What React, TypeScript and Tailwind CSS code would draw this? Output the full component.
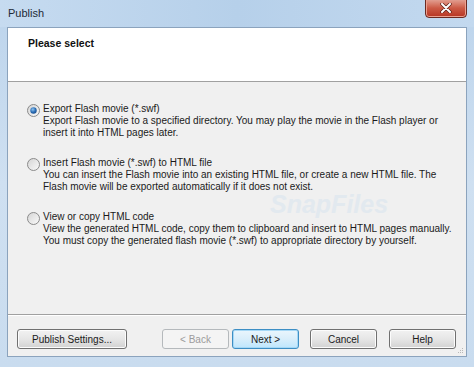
import React from "react";

const font = { fontFamily: '"Liberation Sans", Arial, sans-serif' };

function Radio({ checked }: { checked?: boolean }) {
  return (
    <svg width="13" height="13" viewBox="0 0 13 13" className="shrink-0">
      <defs>
        <linearGradient id={checked ? "rbOn" : "rbOff"} x1="0" y1="0" x2="1" y2="1">
          <stop offset="0" stopColor="#d4d4d4" />
          <stop offset="1" stopColor="#fbfbfb" />
        </linearGradient>
        <radialGradient id="dot" cx="0.4" cy="0.35" r="0.7">
          <stop offset="0" stopColor="#8fc4f0" />
          <stop offset="0.6" stopColor="#2a6cb4" />
          <stop offset="1" stopColor="#1b4f8f" />
        </radialGradient>
      </defs>
      <circle cx="6.5" cy="6.5" r="6" fill={checked ? "url(#rbOn)" : "url(#rbOff)"} stroke="#8a8a8a" strokeWidth="1" />
      {checked && <circle cx="6.5" cy="6.5" r="3.2" fill="url(#dot)" />}
    </svg>
  );
}

function Option({ checked, label, lines }: { checked?: boolean; label: string; lines: string[] }) {
  return (
    <div className="flex items-start gap-[3px]">
      <div className="pt-[1px]">
        <Radio checked={checked} />
      </div>
      <div className="flex flex-col text-[10px] leading-[12px] text-[#1a1a1a]">
        <span>{label}</span>
        {lines.map((l) => (
          <span key={l}>{l}</span>
        ))}
      </div>
    </div>
  );
}

function Btn({ children, w, kind }: { children: React.ReactNode; w: string; kind?: "disabled" | "default" }) {
  const base = "h-[20px] rounded-[3px] border text-[10px] flex items-center justify-center";
  if (kind === "disabled")
    return <div className={`${base} ${w} border-[#b5b9bc] bg-[#f4f4f4] text-[#9c9c9c]`}>{children}</div>;
  if (kind === "default")
    return (
      <div className={`${base} ${w} border-[#3d8ec4] bg-linear-to-b from-[#eaf6fd] via-[#d9eefb] to-[#bee6fd] text-[#1a1a1a] shadow-[inset_0_0_0_1px_#a6d8f6]`}>
        {children}
      </div>
    );
  return (
    <div className={`${base} ${w} border-[#707070] bg-linear-to-b from-[#f2f2f2] via-[#e6e6e6] to-[#d2d2d2] text-[#1a1a1a] shadow-[inset_0_0_0_1px_#fcfcfc]`}>
      {children}
    </div>
  );
}

export default function App() {
  return (
    <div
      className="relative w-[474px] h-[367px] overflow-hidden bg-linear-to-b from-[#bcd4ec] via-[#cfe0f1] to-[#c9dcef] flex flex-col"
      style={font}
    >
      {/* Title bar */}
      <div className="h-[27px] shrink-0 flex items-center pl-[8px] pb-[1px] bg-linear-to-r from-[#c6dbf0] via-[#b6d0ea] to-[#c3d9ef]">
        <span className="text-[11px] text-[#1e2a36]">Publish</span>
      </div>
      <div className="absolute right-[7px] top-[-2px] w-[42px] h-[20px] rounded-b-[4px] border border-[#6b2a22] bg-linear-to-b from-[#e3a598] via-[#cc5a45] to-[#b63422] flex items-center justify-center shadow-[inset_0_0_0_1px_#eba08f]">
        <svg width="12" height="10" viewBox="0 0 12 10">
          <path d="M2 1 L10 9 M10 1 L2 9" stroke="#5a2018" strokeWidth="3.4" strokeLinecap="round" />
          <path d="M2 1 L10 9 M10 1 L2 9" stroke="#ffffff" strokeWidth="2" strokeLinecap="round" />
        </svg>
      </div>

      {/* Client area */}
      <div className="mx-[7px] h-[330px] border border-[#8ba3bd] flex flex-col bg-[#f0f0f0] relative">
        <div className="h-[54px] shrink-0 bg-white border-b border-[#a0a0a0] pl-[20px] pt-[9px]">
          <span className="block text-[10.5px] leading-[12px] font-bold text-[#111]">Please select</span>
        </div>

        <div className="flex-1 pl-[19px] pt-[21px] flex flex-col gap-[18px] border-b border-[#a0a0a0] relative">
          <span className="absolute left-[262px] top-[110px] text-[25px] leading-none font-bold italic text-[#e2e9ef] pointer-events-none select-none">
            SnapFiles
          </span>
          <div className="relative">
            <Option
              checked
              label="Export Flash movie (*.swf)"
              lines={[
                "Export Flash movie to a specified directory. You may play the movie in the Flash player or",
                "insert it into HTML pages later.",
              ]}
            />
          </div>
          <div className="relative">
            <Option
              label="Insert Flash movie (*.swf) to HTML file"
              lines={[
                "You can insert the Flash movie into an existing HTML file, or create a new HTML file. The",
                "Flash movie will be exported automatically if it does not exist.",
              ]}
            />
          </div>
          <div className="relative">
            <Option
              label="View or copy HTML code"
              lines={[
                "View the generated HTML code, copy them to clipboard and insert to HTML pages manually.",
                "You must copy the generated flash movie (*.swf) to appropriate directory by yourself.",
              ]}
            />
          </div>
        </div>

        <div className="h-[41px] shrink-0 border-t border-white flex items-start pt-[13px] pl-[9px]">
          <Btn w="w-[110px]">Publish Settings...</Btn>
          <div className="ml-[35px]">
            <Btn w="w-[67px]" kind="disabled">&lt; Back</Btn>
          </div>
          <div className="ml-[3px]">
            <Btn w="w-[67px]" kind="default">Next &gt;</Btn>
          </div>
          <div className="ml-[11px]">
            <Btn w="w-[67px]">Cancel</Btn>
          </div>
          <div className="ml-[12px]">
            <Btn w="w-[67px]">Help</Btn>
          </div>
        </div>
        <div className="absolute right-[3px] bottom-[3px] grid grid-cols-3 gap-[1px]">
          {[0, 1, 2, 3, 4, 5, 6, 7, 8].map((i) => (
            <span key={i} className={`w-[1px] h-[1px] ${[2, 4, 5, 6, 7, 8].includes(i) ? "bg-[#b8b8b8]" : "bg-transparent"}`} />
          ))}
        </div>
      </div>
    </div>
  );
}
